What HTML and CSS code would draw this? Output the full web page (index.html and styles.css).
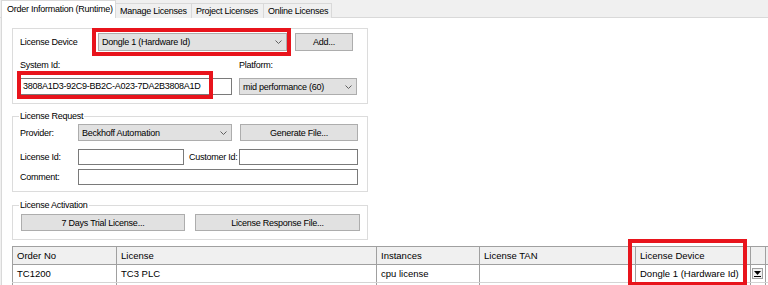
FILE: index.html
```html
<!DOCTYPE html>
<html>
<head>
<meta charset="utf-8">
<link rel="stylesheet" href="styles.css">
</head>
<body>
<div class="win">
  <div class="tabs">
    <div class="tab active">Order Information (Runtime)</div>
    <div class="tab t2">Manage Licenses</div>
    <div class="tab t3">Project Licenses</div>
    <div class="tab t4">Online Licenses</div>
  </div>
  <div class="panel">
    <div class="group g1">
      <div class="row r1">
        <span class="lbl w-dev">License Device</span>
        <div class="combo c-dev"><span class="ctext">Dongle 1 (Hardware Id)</span><svg class="chev" width="7" height="4" viewBox="0 0 7 4"><polyline points="0.5,0.5 3.5,3.5 6.5,0.5" fill="none" stroke="#606060" stroke-width="1"/></svg></div>
        <div class="btn b-add">Add...</div>
      </div>
      <div class="row r2"><span class="lbl w-sys">System Id:</span><span class="lbl">Platform:</span></div>
      <div class="row r3">
        <div class="input i-sys">3808A1D3-92C9-BB2C-A023-7DA2B3808A1D</div>
        <div class="combo c-plat"><span class="ctext">mid performance (60)</span><svg class="chev" width="7" height="4" viewBox="0 0 7 4"><polyline points="0.5,0.5 3.5,3.5 6.5,0.5" fill="none" stroke="#606060" stroke-width="1"/></svg></div>
      </div>
    </div>

    <div class="group g2">
      <span class="legend">License Request</span>
      <div class="row r-prov">
        <span class="lbl w-l2">Provider:</span>
        <div class="combo c-prov"><span class="ctext">Beckhoff Automation</span><svg class="chev" width="7" height="4" viewBox="0 0 7 4"><polyline points="0.5,0.5 3.5,3.5 6.5,0.5" fill="none" stroke="#606060" stroke-width="1"/></svg></div>
        <div class="btn b-gen">Generate File...</div>
      </div>
      <div class="row r-lid">
        <span class="lbl w-l2">License Id:</span>
        <div class="input i-lid"></div>
        <span class="lbl w-cust">Customer Id:</span>
        <div class="input i-cust"></div>
      </div>
      <div class="row r-com">
        <span class="lbl w-l2">Comment:</span>
        <div class="input i-com"></div>
      </div>
    </div>

    <div class="group g3">
      <span class="legend">License Activation</span>
      <div class="row r-act">
        <div class="btn b-trial">7 Days Trial License...</div>
        <div class="btn b-resp">License Response File...</div>
      </div>
    </div>

    <table class="grid">
      <colgroup>
        <col class="k1"><col class="k2"><col class="k3"><col class="k4"><col class="k5"><col class="k6"><col class="k7">
      </colgroup>
      <tr class="head">
        <th>Order No</th><th>License</th><th>Instances</th><th>License TAN</th><th>License Device</th><th></th><th></th>
      </tr>
      <tr>
        <td>TC1200</td><td>TC3 PLC</td><td>cpu license</td><td></td><td>Dongle 1 (Hardware Id)</td><td class="arrowcell"><span class="dd"><svg width="7" height="6" viewBox="0 0 7 6"><polygon points="0,0 7,0 3.5,4" fill="#000"/><rect x="0" y="5" width="7" height="1" fill="#000"/></svg></span></td><td></td>
      </tr>
      <tr>
        <td></td><td></td><td></td><td></td><td></td><td></td><td></td>
      </tr>
    </table>
  </div>

  <div class="mark m1"></div>
  <div class="mark m2"></div>
  <div class="mark m3"></div>
</div>
</body>
</html>
```

FILE: styles.css
```css
* { box-sizing: border-box; }
html, body { margin: 0; padding: 0; }
body {
  font-family: "Liberation Sans", Arial, sans-serif;
  font-size: 9px;
  letter-spacing: -0.25px;
  color: #000;
  background: #f0f0f0;
  overflow: hidden;
}
.win {
  position: relative;
  width: 768px;
  height: 285px;
  overflow: hidden;
  background: #f0f0f0;
}
.tabs {
  display: flex;
  align-items: flex-end;
  height: 18px;
  box-shadow: inset 0 -1px #d9d9d9;
}
.tab {
  height: 15px;
  line-height: 14px;
  border-top: 1px solid #d9d9d9;
  border-right: 1px solid #d9d9d9;
  padding-left: 4px;
  white-space: nowrap;
  background: #f0f0f0;
}
.tab.active {
  height: 18px;
  line-height: 17px;
  width: 115px;
  margin-left: 1px;
  border-left: 1px solid #d9d9d9;
  background: #fff;
  padding-left: 5px;
}
.t2 { width: 76px; }
.t3 { width: 72px; }
.t4 { width: 68px; }

.panel {
  height: 267px;
  margin-left: 1px;
  border-left: 1px solid #d9d9d9;
  background: #fff;
  padding: 10px 0 0 10px;
}
.group {
  position: relative;
  width: 356px;
  border: 1px solid #dcdcdc;
}
.g1 { height: 76px; padding: 4px 0 0 7px; }
.g2 { height: 76px; margin-top: 12px; padding: 7px 0 0 7px; }
.g3 { height: 35px; margin-top: 13px; padding: 8px 0 0 8px; }
.legend {
  position: absolute;
  top: -7px;
  left: 6px;
  line-height: 12px;
  padding: 0 1px;
  background: #fff;
  white-space: nowrap;
}
.row { display: flex; align-items: center; }
.lbl { white-space: nowrap; line-height: 12px; }
.r1 { height: 18px; }
.w-dev { width: 78px; }
.r2 { height: 12px; margin-top: 8px; }
.w-sys { width: 219px; }
.r3 { height: 17px; margin-top: 7px; }

.combo {
  display: flex;
  align-items: center;
  justify-content: space-between;
  background: #e1e1e1;
  border: 1px solid #adadad;
  padding: 0 4px 0 3px;
  white-space: nowrap;
}
.ctext { line-height: 12px; }
.chev { display: block; flex: none; }
.btn {
  display: flex;
  align-items: center;
  justify-content: center;
  background: #e1e1e1;
  border: 1px solid #adadad;
  white-space: nowrap;
}
.input {
  background: #fff;
  border: 1px solid #7a7a7a;
  padding-left: 2px;
  line-height: 14px;
  white-space: nowrap;
}
.c-dev { width: 189px; height: 18px; margin-right: 8px; }
.b-add { width: 58px; height: 18px; }
.i-sys { width: 212px; height: 17px; margin-right: 7px; }
.c-plat { width: 118px; height: 17px; }

.r-prov { height: 17px; }
.w-l2 { width: 58px; }
.c-prov { width: 154px; height: 17px; margin-right: 8px; }
.b-gen { width: 118px; height: 17px; }
.r-lid { height: 16px; margin-top: 8px; }
.i-lid { width: 106px; height: 16px; margin-right: 5px; }
.w-cust { width: 50px; }
.i-cust { width: 119px; height: 16px; }
.r-com { height: 16px; margin-top: 4px; }
.i-com { width: 280px; height: 16px; }

.r-act { height: 17px; }
.b-trial { width: 164px; height: 17px; margin-right: 10px; }
.b-resp { width: 165px; height: 17px; }

.grid {
  margin-top: 6px;
  border-collapse: collapse;
  table-layout: fixed;
  width: 790px;
  font-family: "Liberation Sans", Arial, sans-serif;
  font-size: 9.5px;
  letter-spacing: 0;
}
.k1 { width: 104px; }
.k2 { width: 260px; }
.k3 { width: 103px; }
.k4 { width: 156px; }
.k5 { width: 115px; }
.k6 { width: 15px; }
.k7 { width: 37px; }
.grid th, .grid td {
  height: 18px;
  padding: 0 0 0 4px;
  text-align: left;
  font-weight: normal;
  white-space: nowrap;
  overflow: hidden;
  border: 1px solid #d4d4d4;
}
.grid .head th {
  background: #f0f0f0;
  border: 1px solid #a0a0a0;
}
.grid td:first-child, .grid th:first-child { border-left: 1px solid #a0a0a0; }
.grid td { border-right: 1px solid #a0a0a0; }
.arrowcell { padding: 0 !important; }
.dd {
  display: flex;
  align-items: center;
  justify-content: center;
  width: 11px;
  height: 11px;
  margin-left: 1px;
  background: #f0f0f0;
  border: 1px solid #a0a0a0;
}
.dd svg { display: block; }

.mark {
  position: absolute;
  border: 4px solid #e8141c;
  pointer-events: none;
}
.m1 { left: 92px; top: 28px; width: 199px; height: 28px; }
.m2 { left: 17px; top: 71px; width: 196px; height: 28px; }
.m3 { left: 628px; top: 239px; width: 119px; height: 47px; }
```
